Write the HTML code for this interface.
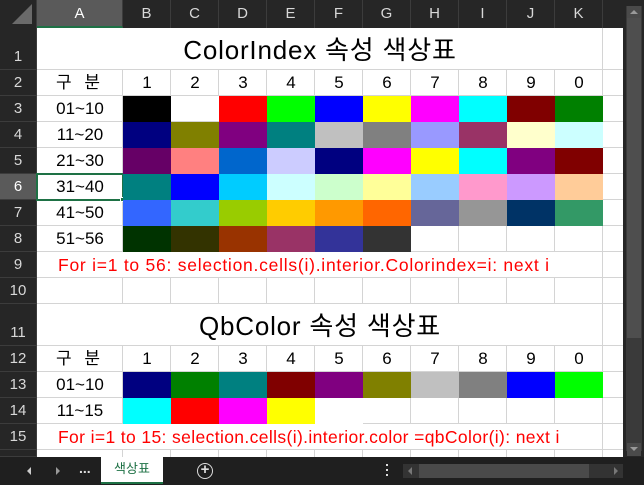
<!DOCTYPE html>
<html><head><meta charset="utf-8"><style>
*{margin:0;padding:0;box-sizing:border-box}
body{width:644px;height:485px;overflow:hidden;background:#fff;position:relative;font-family:"Liberation Sans","Noto Sans CJK KR",sans-serif}
.a{position:absolute}
.hl{position:absolute;height:1px;background:#d4d4d4}
.vl{position:absolute;width:1px;background:#d4d4d4}
.ch{position:absolute;top:0;height:28px;color:#d8d8d8;font-size:15px;line-height:28px;text-align:center;border-right:1px solid #3c3c3c;background:#262626}
.rh{position:absolute;left:0;width:36px;color:#d8d8d8;font-size:15px;text-align:center;background:#262626;border-bottom:1px solid #3c3c3c}
.t{position:absolute;font-size:17px;text-align:center;color:#000;line-height:26px}
.c{position:absolute;height:26px;width:48px}
.red{position:absolute;color:#f00;font-size:17.5px;letter-spacing:0.75px;line-height:26px;left:58px;white-space:nowrap}
.ttl{position:absolute;left:37px;width:566px;text-align:center;font-size:26px;letter-spacing:0.8px;line-height:36px;color:#000}
</style></head><body>
<div class="a" style="left:0;top:0;width:644px;height:28px;background:#262626"></div>
<div class="ch" style="left:0;width:37px"><div style="position:absolute;right:4px;bottom:4px;width:0;height:0;border-left:20px solid transparent;border-bottom:20px solid #6a6a6a"></div></div>
<div class="ch" style="left:37px;width:86px;background:#5a5a5a;border-bottom:2px solid #1e7145;color:#fff">A</div>
<div class="ch" style="left:123px;width:48px">B</div>
<div class="ch" style="left:171px;width:48px">C</div>
<div class="ch" style="left:219px;width:48px">D</div>
<div class="ch" style="left:267px;width:48px">E</div>
<div class="ch" style="left:315px;width:48px">F</div>
<div class="ch" style="left:363px;width:48px">G</div>
<div class="ch" style="left:411px;width:48px">H</div>
<div class="ch" style="left:459px;width:48px">I</div>
<div class="ch" style="left:507px;width:48px">J</div>
<div class="ch" style="left:555px;width:48px">K</div>
<div class="a" style="left:0;top:28px;width:37px;height:429px;background:#262626;border-right:1px solid #3c3c3c"></div>
<div class="rh" style="top:28px;height:42px;line-height:58px">1</div>
<div class="rh" style="top:70px;height:26px;line-height:26px">2</div>
<div class="rh" style="top:96px;height:26px;line-height:26px">3</div>
<div class="rh" style="top:122px;height:26px;line-height:26px">4</div>
<div class="rh" style="top:148px;height:26px;line-height:26px">5</div>
<div class="rh" style="top:174px;height:26px;line-height:26px;background:#5a5a5a;color:#fff">6</div>
<div class="rh" style="top:200px;height:26px;line-height:26px">7</div>
<div class="rh" style="top:226px;height:26px;line-height:26px">8</div>
<div class="rh" style="top:252px;height:26px;line-height:26px">9</div>
<div class="rh" style="top:278px;height:26px;line-height:26px">10</div>
<div class="rh" style="top:304px;height:42px;line-height:58px">11</div>
<div class="rh" style="top:346px;height:26px;line-height:26px">12</div>
<div class="rh" style="top:372px;height:26px;line-height:26px">13</div>
<div class="rh" style="top:398px;height:26px;line-height:26px">14</div>
<div class="rh" style="top:424px;height:26px;line-height:26px">15</div>
<div class="rh" style="top:450px;height:7px">&nbsp;</div>
<div class="hl" style="left:37px;width:586px;top:69px"></div>
<div class="hl" style="left:37px;width:586px;top:95px"></div>
<div class="hl" style="left:37px;width:586px;top:121px"></div>
<div class="hl" style="left:37px;width:586px;top:147px"></div>
<div class="hl" style="left:37px;width:586px;top:173px"></div>
<div class="hl" style="left:37px;width:586px;top:199px"></div>
<div class="hl" style="left:37px;width:586px;top:225px"></div>
<div class="hl" style="left:37px;width:586px;top:251px"></div>
<div class="hl" style="left:37px;width:586px;top:277px"></div>
<div class="hl" style="left:37px;width:586px;top:303px"></div>
<div class="hl" style="left:37px;width:586px;top:345px"></div>
<div class="hl" style="left:37px;width:586px;top:371px"></div>
<div class="hl" style="left:37px;width:586px;top:397px"></div>
<div class="hl" style="left:37px;width:586px;top:423px"></div>
<div class="hl" style="left:37px;width:586px;top:449px"></div>
<div class="vl" style="left:602px;top:28px;height:429px"></div>
<div class="a" style="left:37px;top:28px;width:565px;height:41px;background:#fff"></div>
<div class="a" style="left:37px;top:304px;width:565px;height:41px;background:#fff"></div>
<div class="a" style="left:37px;top:252px;width:565px;height:25px;background:#fff"></div>
<div class="a" style="left:37px;top:424px;width:565px;height:25px;background:#fff"></div>
<div class="vl" style="left:122px;top:70px;height:182px"></div><div class="vl" style="left:122px;top:278px;height:26px"></div><div class="vl" style="left:122px;top:346px;height:78px"></div><div class="vl" style="left:122px;top:450px;height:7px"></div>
<div class="vl" style="left:170px;top:70px;height:182px"></div><div class="vl" style="left:170px;top:278px;height:26px"></div><div class="vl" style="left:170px;top:346px;height:78px"></div><div class="vl" style="left:170px;top:450px;height:7px"></div>
<div class="vl" style="left:218px;top:70px;height:182px"></div><div class="vl" style="left:218px;top:278px;height:26px"></div><div class="vl" style="left:218px;top:346px;height:78px"></div><div class="vl" style="left:218px;top:450px;height:7px"></div>
<div class="vl" style="left:266px;top:70px;height:182px"></div><div class="vl" style="left:266px;top:278px;height:26px"></div><div class="vl" style="left:266px;top:346px;height:78px"></div><div class="vl" style="left:266px;top:450px;height:7px"></div>
<div class="vl" style="left:314px;top:70px;height:182px"></div><div class="vl" style="left:314px;top:278px;height:26px"></div><div class="vl" style="left:314px;top:346px;height:78px"></div><div class="vl" style="left:314px;top:450px;height:7px"></div>
<div class="vl" style="left:362px;top:70px;height:182px"></div><div class="vl" style="left:362px;top:278px;height:26px"></div><div class="vl" style="left:362px;top:346px;height:78px"></div><div class="vl" style="left:362px;top:450px;height:7px"></div>
<div class="vl" style="left:410px;top:70px;height:182px"></div><div class="vl" style="left:410px;top:278px;height:26px"></div><div class="vl" style="left:410px;top:346px;height:78px"></div><div class="vl" style="left:410px;top:450px;height:7px"></div>
<div class="vl" style="left:458px;top:70px;height:182px"></div><div class="vl" style="left:458px;top:278px;height:26px"></div><div class="vl" style="left:458px;top:346px;height:78px"></div><div class="vl" style="left:458px;top:450px;height:7px"></div>
<div class="vl" style="left:506px;top:70px;height:182px"></div><div class="vl" style="left:506px;top:278px;height:26px"></div><div class="vl" style="left:506px;top:346px;height:78px"></div><div class="vl" style="left:506px;top:450px;height:7px"></div>
<div class="vl" style="left:554px;top:70px;height:182px"></div><div class="vl" style="left:554px;top:278px;height:26px"></div><div class="vl" style="left:554px;top:346px;height:78px"></div><div class="vl" style="left:554px;top:450px;height:7px"></div>

<div class="ttl" style="top:32px">ColorIndex 속성 색상표</div>
<div class="ttl" style="top:308px">QbColor 속성 색상표</div>

<div class="t" style="left:37px;top:70px;width:86px;letter-spacing:4px">구 분</div>
<div class="t" style="left:123px;top:70px;width:48px">1</div><div class="t" style="left:171px;top:70px;width:48px">2</div><div class="t" style="left:219px;top:70px;width:48px">3</div><div class="t" style="left:267px;top:70px;width:48px">4</div><div class="t" style="left:315px;top:70px;width:48px">5</div><div class="t" style="left:363px;top:70px;width:48px">6</div><div class="t" style="left:411px;top:70px;width:48px">7</div><div class="t" style="left:459px;top:70px;width:48px">8</div><div class="t" style="left:507px;top:70px;width:48px">9</div><div class="t" style="left:555px;top:70px;width:48px">0</div>
<div class="t" style="left:37px;top:96px;width:86px">01~10</div>
<div class="t" style="left:37px;top:122px;width:86px">11~20</div>
<div class="t" style="left:37px;top:148px;width:86px">21~30</div>
<div class="t" style="left:37px;top:174px;width:86px">31~40</div>
<div class="t" style="left:37px;top:200px;width:86px">41~50</div>
<div class="t" style="left:37px;top:226px;width:86px">51~56</div>
<div class="a" style="left:36px;top:173px;width:88px;height:28px;border:2px solid #1e7145"></div>
<div class="a" style="left:120px;top:197px;width:5px;height:5px;background:#1e7145;border:1px solid #fff"></div>

<div class="c" style="left:123px;top:96px;background:#000"></div>
<div class="c" style="left:219px;top:96px;background:#f00"></div>
<div class="c" style="left:267px;top:96px;background:#0f0"></div>
<div class="c" style="left:315px;top:96px;background:#00f"></div>
<div class="c" style="left:363px;top:96px;background:#ff0"></div>
<div class="c" style="left:411px;top:96px;background:#f0f"></div>
<div class="c" style="left:459px;top:96px;background:#0ff"></div>
<div class="c" style="left:507px;top:96px;background:#800000"></div>
<div class="c" style="left:555px;top:96px;background:#008000"></div>
<div class="a" style="left:171px;top:96px;width:48px;height:25px;background:#fff"></div>
<div class="c" style="left:123px;top:122px;background:#000080"></div>
<div class="c" style="left:171px;top:122px;background:#808000"></div>
<div class="c" style="left:219px;top:122px;background:#800080"></div>
<div class="c" style="left:267px;top:122px;background:#008080"></div>
<div class="c" style="left:315px;top:122px;background:#c0c0c0"></div>
<div class="c" style="left:363px;top:122px;background:#808080"></div>
<div class="c" style="left:411px;top:122px;background:#9999ff"></div>
<div class="c" style="left:459px;top:122px;background:#993366"></div>
<div class="c" style="left:507px;top:122px;background:#ffffcc"></div>
<div class="c" style="left:555px;top:122px;background:#ccffff"></div>
<div class="c" style="left:123px;top:148px;background:#660066"></div>
<div class="c" style="left:171px;top:148px;background:#ff8080"></div>
<div class="c" style="left:219px;top:148px;background:#0066cc"></div>
<div class="c" style="left:267px;top:148px;background:#ccccff"></div>
<div class="c" style="left:315px;top:148px;background:#000080"></div>
<div class="c" style="left:363px;top:148px;background:#f0f"></div>
<div class="c" style="left:411px;top:148px;background:#ff0"></div>
<div class="c" style="left:459px;top:148px;background:#0ff"></div>
<div class="c" style="left:507px;top:148px;background:#800080"></div>
<div class="c" style="left:555px;top:148px;background:#800000"></div>
<div class="c" style="left:123px;top:174px;background:#008080"></div>
<div class="c" style="left:171px;top:174px;background:#00f"></div>
<div class="c" style="left:219px;top:174px;background:#00ccff"></div>
<div class="c" style="left:267px;top:174px;background:#ccffff"></div>
<div class="c" style="left:315px;top:174px;background:#ccffcc"></div>
<div class="c" style="left:363px;top:174px;background:#ffff99"></div>
<div class="c" style="left:411px;top:174px;background:#99ccff"></div>
<div class="c" style="left:459px;top:174px;background:#ff99cc"></div>
<div class="c" style="left:507px;top:174px;background:#cc99ff"></div>
<div class="c" style="left:555px;top:174px;background:#ffcc99"></div>
<div class="c" style="left:123px;top:200px;background:#3366ff"></div>
<div class="c" style="left:171px;top:200px;background:#33cccc"></div>
<div class="c" style="left:219px;top:200px;background:#99cc00"></div>
<div class="c" style="left:267px;top:200px;background:#ffcc00"></div>
<div class="c" style="left:315px;top:200px;background:#ff9900"></div>
<div class="c" style="left:363px;top:200px;background:#ff6600"></div>
<div class="c" style="left:411px;top:200px;background:#666699"></div>
<div class="c" style="left:459px;top:200px;background:#969696"></div>
<div class="c" style="left:507px;top:200px;background:#003366"></div>
<div class="c" style="left:555px;top:200px;background:#339966"></div>
<div class="c" style="left:123px;top:226px;background:#003300"></div>
<div class="c" style="left:171px;top:226px;background:#333300"></div>
<div class="c" style="left:219px;top:226px;background:#993300"></div>
<div class="c" style="left:267px;top:226px;background:#993366"></div>
<div class="c" style="left:315px;top:226px;background:#333399"></div>
<div class="c" style="left:363px;top:226px;background:#333333"></div>

<div class="red" style="top:252px">For i=1 to 56: selection.cells(i).interior.Colorindex=i: next i</div>

<div class="t" style="left:37px;top:346px;width:86px;letter-spacing:4px">구 분</div>
<div class="t" style="left:123px;top:346px;width:48px">1</div><div class="t" style="left:171px;top:346px;width:48px">2</div><div class="t" style="left:219px;top:346px;width:48px">3</div><div class="t" style="left:267px;top:346px;width:48px">4</div><div class="t" style="left:315px;top:346px;width:48px">5</div><div class="t" style="left:363px;top:346px;width:48px">6</div><div class="t" style="left:411px;top:346px;width:48px">7</div><div class="t" style="left:459px;top:346px;width:48px">8</div><div class="t" style="left:507px;top:346px;width:48px">9</div><div class="t" style="left:555px;top:346px;width:48px">0</div>
<div class="t" style="left:37px;top:372px;width:86px">01~10</div>
<div class="t" style="left:37px;top:398px;width:86px">11~15</div>
<div class="c" style="left:123px;top:372px;background:#000080"></div>
<div class="c" style="left:171px;top:372px;background:#008000"></div>
<div class="c" style="left:219px;top:372px;background:#008080"></div>
<div class="c" style="left:267px;top:372px;background:#800000"></div>
<div class="c" style="left:315px;top:372px;background:#800080"></div>
<div class="c" style="left:363px;top:372px;background:#808000"></div>
<div class="c" style="left:411px;top:372px;background:#c0c0c0"></div>
<div class="c" style="left:459px;top:372px;background:#808080"></div>
<div class="c" style="left:507px;top:372px;background:#00f"></div>
<div class="c" style="left:555px;top:372px;background:#0f0"></div>
<div class="c" style="left:123px;top:398px;background:#0ff"></div>
<div class="c" style="left:171px;top:398px;background:#f00"></div>
<div class="c" style="left:219px;top:398px;background:#f0f"></div>
<div class="c" style="left:267px;top:398px;background:#ff0"></div>
<div class="a" style="left:315px;top:398px;width:48px;height:26px;background:#fff"></div>
<div class="red" style="top:424px;letter-spacing:0.37px">For i=1 to 15: selection.cells(i).interior.color =qbColor(i): next i</div>

<div class="a" style="left:623px;top:0;width:21px;height:457px;background:#262626"></div>
<div class="a" style="left:626px;top:6px;width:16px;height:445px;background:#3a3a3a"></div>
<div class="a" style="left:627px;top:6px;width:14px;height:14px;background:#4a4a4a"></div>
<div class="a" style="left:630px;top:10px;width:0;height:0;border-left:4px solid transparent;border-right:4px solid transparent;border-bottom:4px solid #999"></div>
<div class="a" style="left:627px;top:18px;width:14px;height:320px;background:#4e4e4e"></div>
<div class="a" style="left:627px;top:443px;width:14px;height:13px;background:#4a4a4a"></div>
<div class="a" style="left:630px;top:447px;width:0;height:0;border-left:4px solid transparent;border-right:4px solid transparent;border-top:4px solid #999"></div>

<div class="a" style="left:0;top:457px;width:644px;height:28px;background:#1f1f1f"></div>
<div class="a" style="left:27px;top:467px;width:0;height:0;border-top:4px solid transparent;border-bottom:4px solid transparent;border-right:4px solid #ccc"></div>
<div class="a" style="left:56px;top:467px;width:0;height:0;border-top:4px solid transparent;border-bottom:4px solid transparent;border-left:4px solid #999"></div>
<div class="a" style="left:79px;top:460px;color:#ddd;font-size:14px;font-weight:bold">...</div>
<div class="a" style="left:101px;top:457px;width:62px;height:27px;background:#fff;border-bottom:2px solid #1e7145;color:#1e7145;font-size:13px;text-align:center;line-height:24px">색상표</div>
<div class="a" style="left:197px;top:463px;width:16px;height:16px;border:1.5px solid #ddd;border-radius:50%;color:#ddd;font-size:15px;line-height:12px;text-align:center;font-weight:bold">+</div>
<div class="a" style="left:386px;top:464px;width:2px;height:2px;background:#ddd;box-shadow:0 5px 0 #ddd,0 10px 0 #ddd"></div>
<div class="a" style="left:403px;top:464px;width:220px;height:14px;background:#333"></div>
<div class="a" style="left:419px;top:464px;width:170px;height:14px;background:#4a4a4a"></div>
<div class="a" style="left:408px;top:467px;width:0;height:0;border-top:4px solid transparent;border-bottom:4px solid transparent;border-right:4px solid #777"></div>
<div class="a" style="left:614px;top:467px;width:0;height:0;border-top:4px solid transparent;border-bottom:4px solid transparent;border-left:4px solid #777"></div>
</body></html>
